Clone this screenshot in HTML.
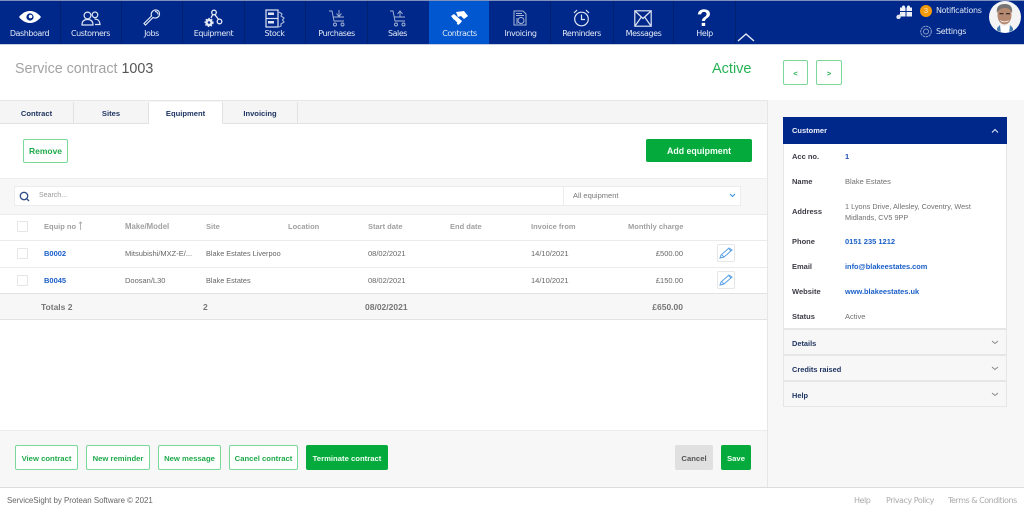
<!DOCTYPE html>
<html><head><meta charset="utf-8"><style>
html,body{margin:0;padding:0}
body{width:1024px;height:516px;position:relative;overflow:hidden;background:#fff;font-family:"Liberation Sans",sans-serif;font-size:7.5px;color:#666}
div,span.t,a,svg{position:absolute}
.t{position:absolute;white-space:nowrap;line-height:12px}
.n{color:#e4e9f5;top:28px;width:61px;text-align:center;line-height:12px;position:absolute;font-family:"DejaVu Sans",sans-serif;letter-spacing:-.45px;font-size:8px}
.sep{position:absolute;top:1px;height:43px;width:1px;background:#00216f}
.ic{position:absolute;fill:none;stroke:#dfe5f3;stroke-width:1.2}
.tab{position:absolute;top:102px;height:22px;line-height:23px;text-align:center;font-weight:bold;color:#1f3561;font-size:7.6px;box-sizing:border-box;border-right:1px solid #e2e2e2;border-bottom:1px solid #e2e2e2;background:#f5f5f5}
.b{position:absolute;box-sizing:border-box;border:1px solid #7bd79a;border-radius:2px;color:#1faa4a;background:#fff;font-weight:bold;text-align:center;font-size:7.7px;font-family:"Liberation Sans",sans-serif}
.g{background:#04aa3c;border-color:#04aa3c;color:#f2fff5}
.h{font-weight:bold;color:#a0a0a0;top:221px}
.hl{position:absolute;left:0;width:767px;height:1px;background:#ebebeb}
.c{position:absolute;left:17px;width:9px;height:9px;border:1px solid #e6e6e6;border-radius:1px;background:#fff}
.l{left:792px;font-weight:bold;color:#3c3c46}
.v{left:845px;color:#707070}
.lk{left:845px;font-weight:bold;color:#1a5fc8}
.acc{position:absolute;left:783px;width:224px;height:26px;box-sizing:border-box;border:1px solid #e6e6e6;background:#f7f7f7;font-weight:bold;color:#1f3561;line-height:27px;padding-left:8px;font-size:7.4px}
.pen{position:absolute;left:717px;width:18px;height:18px;box-sizing:border-box;border:1px solid #e6e6e6;border-radius:2px;background:#fff}
.f{top:495px;color:#aaa;font-size:8px;font-family:'DejaVu Sans',sans-serif;letter-spacing:-.47px}
</style></head><body>

<div style="left:0;top:0;width:1024px;height:45px;background:#00288a;border-top:1px solid #7f90bd;border-bottom:1px solid #c5cde0;box-sizing:border-box"></div>
<div style="left:429px;top:1px;width:60px;height:43px;background:#0057cf"></div>
<span class="sep" style="left:60px"></span><span class="sep" style="left:121px"></span><span class="sep" style="left:182px"></span><span class="sep" style="left:244px"></span><span class="sep" style="left:305px"></span><span class="sep" style="left:367px"></span><span class="sep" style="left:550px"></span><span class="sep" style="left:613px"></span><span class="sep" style="left:673px"></span><span class="sep" style="left:735px"></span>

<span class="n" style="left:-1px">Dashboard</span><span class="n" style="left:60px">Customers</span><span class="n" style="left:121px">Jobs</span><span class="n" style="left:183px">Equipment</span><span class="n" style="left:244px">Stock</span><span class="n" style="left:306px">Purchases</span><span class="n" style="left:367px">Sales</span><span class="n" style="left:429px">Contracts</span><span class="n" style="left:490px">Invoicing</span><span class="n" style="left:551px">Reminders</span><span class="n" style="left:613px">Messages</span><span class="n" style="left:674px">Help</span>

<!-- dashboard eye -->
<svg style="left:18px;top:10px" width="24" height="14" viewBox="0 0 24 14"><path d="M1 7C5 2 9 1 12 1s7 1 11 6c-4 5-8 6-11 6S5 12 1 7z" fill="#fff"/><circle cx="12" cy="7" r="3.6" fill="#00288a"/><circle cx="12.5" cy="6.5" r="1.8" fill="#fff"/></svg>
<!-- customers -->
<svg class="ic" style="left:81px;top:11px" width="20" height="15" viewBox="0 0 20 15"><circle cx="6.5" cy="4.5" r="3.4"/><path d="M1 14c0-4 2.500-5.500 5.500-5.500S12 10 12 14z"/><circle cx="14" cy="3.800" r="2.800"/><path d="M13.500 8c3 0 5 1 5.500 5.500h-5"/></svg>
<!-- jobs -->
<svg class="ic" style="left:143px;top:9px" width="18" height="18" viewBox="0 0 18 18"><path d="M10 8.500L2.500 16 1 14.500 8.500 7C7.500 4 9.500 1 13 1c2 0 3.500 1.500 3.500 4 0 3-3.500 5-6.500 3.500z"/><path d="M12 2.500a3 3 0 0 1 3 3"/></svg>
<!-- equipment -->
<svg style="left:204px;top:9px" width="19" height="19" viewBox="0 0 19 19" fill="none" stroke="#e4e9f5" stroke-width="1.300"><circle cx="10" cy="3.500" r="2.300"/><circle cx="15.500" cy="12.500" r="2.300"/><path d="M11 5.800l3.500 4.600M8.700 5.500L7 9"/><circle cx="5" cy="13.500" r="2.500" stroke-width="2.400"/><circle cx="5" cy="13.500" r="4" stroke-width="1.200" stroke-dasharray="1.500 1.500"/></svg>
<!-- stock -->
<svg class="ic" style="left:265px;top:9px" width="20" height="19" viewBox="0 0 20 19"><rect x="1" y="1" width="12" height="17"/><path d="M1 9.500h12"/><rect x="3" y="3.500" width="6" height="2.500" fill="#dfe5f3" stroke="none"/><rect x="3" y="12" width="6" height="2.500" fill="#dfe5f3" stroke="none"/><path d="M14 3l3 2-1 2 3 2-1.500 2 1.500 2-3 2 0 2-2 1" stroke="#9fb0d6"/></svg>
<!-- purchases -->
<svg style="left:329px;top:10px" width="18" height="18" viewBox="0 0 18 18" fill="none" stroke="#a9b6d6" stroke-width=".9"><path d="M0 1h3l2 10h10M4 7h11"/><circle cx="6" cy="14.500" r="1.500"/><circle cx="13.500" cy="14.500" r="1.500"/><path d="M10 0v6M7.500 3.500L10 6.500l2.500-3"/></svg>
<!-- sales -->
<svg style="left:390px;top:10px" width="18" height="18" viewBox="0 0 18 18" fill="none" stroke="#a9b6d6" stroke-width=".9"><path d="M0 1h3l2 10h10M4 7h11"/><circle cx="6" cy="14.500" r="1.500"/><circle cx="13.500" cy="14.500" r="1.500"/><path d="M10 7V2M7.500 4L10 1l2.500 3"/></svg>
<!-- contracts -->
<svg style="left:451px;top:11px" width="17" height="15" viewBox="0 0 17 15"><path d="M5 1l8-1 4 5-4 3-3-3-3 1z" fill="#fff"/><path d="M0 5l3-2 8 7-1.500 2L8.500 13 7 14z" fill="#fff"/><path d="M3 9l3 3" stroke="#0057cf" stroke-width="1"/></svg>
<!-- invoicing -->
<svg style="left:513px;top:10px" width="14" height="16" viewBox="0 0 14 16" fill="none" stroke="#a9b6d6"><path d="M1 1h9l3 3v11H1z"/><path d="M3 3.500h6M3 5.500h8"/><circle cx="8" cy="10.500" r="3"/><path d="M3 9h2M3 11h2M3 13h2"/></svg>
<!-- reminders -->
<svg class="ic" style="left:573px;top:9px" width="17" height="18" viewBox="0 0 17 18"><circle cx="8.500" cy="10" r="6.800"/><path d="M8.500 5.500V10.500H12M1 4l3-3M16 4l-3-3"/></svg>
<!-- messages -->
<svg class="ic" style="left:634px;top:10px" width="18" height="17" viewBox="0 0 18 17"><rect x=".8" y=".8" width="16.400" height="15.400"/><path d="M1 1l8 7.500L17 1M1 16l6-8.500M17 16l-6-8.500"/></svg>
<!-- help -->
<span class="t" style="left:694px;top:8px;width:20px;text-align:center;color:#fff;font-weight:bold;font-size:24px;line-height:22px">?</span>
<svg style="left:737px;top:32px" width="18" height="10" viewBox="0 0 18 10" fill="none" stroke="#e8ecf6" stroke-width="1.400"><path d="M1 9l8-7 8 7"/></svg>

<!-- top right -->
<svg style="left:896px;top:5px" width="16" height="14" viewBox="0 0 16 14"><rect x="4" y="2.500" width="12" height="9" fill="#eef1f8"/><path d="M10 2.500v9M4 6.500h12" stroke="#00288a" stroke-width="1"/><circle cx="7.500" cy="2" r="1.500" fill="#eef1f8"/><circle cx="12.500" cy="2" r="1.500" fill="#eef1f8"/><circle cx="2.500" cy="12" r="2.200" fill="#dde3ee"/><path d="M3 11l3-3" stroke="#dde3ee" stroke-width="1.500"/></svg>
<div style="left:920px;top:5px;width:12px;height:12px;border-radius:50%;background:#f59a0c;color:#fde9c6;font-size:7.500px;line-height:12px;text-align:center">3</div>
<span class="t" style="left:936px;top:5px;color:#dfe5f3;font-size:8px;font-family:'DejaVu Sans',sans-serif;letter-spacing:-.35px">Notifications</span>
<svg style="left:919px;top:25px" width="14" height="13" viewBox="0 0 14 13" fill="none" stroke="#8c9dca"><circle cx="7" cy="6.500" r="2.500"/><circle cx="7" cy="6.500" r="5.300" stroke-dasharray="2.500 .6"/></svg>
<span class="t" style="left:936px;top:26px;color:#dfe5f3;font-size:8px;font-family:'DejaVu Sans',sans-serif;letter-spacing:-.35px">Settings</span>
<svg style="left:988px;top:0" width="34" height="34" viewBox="0 0 34 34"><defs><clipPath id="cp"><circle cx="17" cy="17" r="15.500"/></clipPath></defs><circle cx="17" cy="17" r="16" fill="#f4f4f4"/><g clip-path="url(#cp)"><path d="M4 34c1-6 6-8 13-8s12 2 13 8z" fill="#fff"/><path d="M9 28l3-3 1 9H9zM25 28l-3-3-1 9h4z" fill="#4a7fb0"/><ellipse cx="16.500" cy="15" rx="7" ry="9.500" fill="#b58870"/><path d="M9 13c-1-7 3-9 8-9s8 3 7 9c-2-4-4-5-7-5s-6 1-8 5z" fill="#777573"/><path d="M12 20c3 2 6 2 9 0-1 3-8 3-9 0z" fill="#fff"/><rect x="11.500" y="13" width="4" height="1.300" fill="#3c2c26"/><rect x="18" y="13" width="4" height="1.300" fill="#3c2c26"/></g></svg>

<!-- header -->
<span class="t" style="left:15px;top:60px;font-size:14.300px;line-height:18px;color:#a3a3a3">Service contract <span style="color:#555">1003</span></span>
<span class="t" style="left:712px;top:60px;font-size:14.500px;line-height:18px;color:#26b355">Active</span>
<div class="b" style="left:783px;top:60px;width:25px;height:25px;line-height:25px">&lt;</div>
<div class="b" style="left:816px;top:60px;width:26px;height:25px;line-height:25px">&gt;</div>

<!-- right column -->
<div style="left:768px;top:100px;width:256px;height:387px;background:#f7f7f7"></div>
<div style="left:767px;top:100px;width:1px;height:387px;background:#e6e6e6"></div>
<div style="left:0;top:100px;width:768px;height:1px;background:#e6e6e6"></div>

<!-- tabs -->
<div style="left:0;top:101px;width:767px;height:23px;background:#f5f5f5;border-bottom:1px solid #e2e2e2;box-sizing:border-box"></div>
<div class="tab" style="left:0;width:74px">Contract</div>
<div class="tab" style="left:74px;width:75px">Sites</div>
<div class="tab" style="left:149px;width:74px;background:#fff;border-bottom-color:#fff">Equipment</div>
<div class="tab" style="left:223px;width:75px">Invoicing</div>

<div class="b" style="left:23px;top:139px;width:45px;height:24px;line-height:23px;font-size:8.500px">Remove</div>
<div class="b g" style="left:646px;top:139px;width:106px;height:23px;line-height:23px;font-size:8.800px">Add equipment</div>

<div style="left:0;top:178px;width:767px;height:36px;background:#f7f7f7;border-top:1px solid #eeeeee;box-sizing:border-box"></div>
<div style="left:14px;top:186px;width:727px;height:20px;background:#fff;border:1px solid #ececec;box-sizing:border-box"></div>
<div style="left:563px;top:186px;width:1px;height:20px;background:#ececec"></div>
<svg style="left:19px;top:191px" width="11" height="11" viewBox="0 0 11 11" fill="none" stroke="#2f4f86" stroke-width="1.300"><circle cx="5" cy="5" r="3.700"/><path d="M7.500 7.500L10 10"/></svg>
<span class="t" style="left:39px;top:190px;color:#999;font-size:7px">Search...</span>
<span class="t" style="left:573px;top:190px;color:#777">All equipment</span>
<svg style="left:729px;top:193px" width="7" height="5" viewBox="0 0 7 5" fill="none" stroke="#3a8fdc" stroke-width="1.100"><path d="M1 1l2.500 2.500L6 1"/></svg>

<!-- table -->
<div class="hl" style="top:214px"></div><div class="hl" style="top:240px"></div><div class="hl" style="top:267px"></div>
<div style="left:0;top:293px;width:767px;height:27px;background:#f7f7f7;border-top:1px solid #e2e2e2;border-bottom:1px solid #e2e2e2;box-sizing:border-box"></div>
<div class="c" style="top:221px"></div><div class="c" style="top:248px"></div><div class="c" style="top:275px"></div>
<span class="t h" style="left:44px">Equip no</span>
<svg style="left:78px;top:221px" width="5" height="9" viewBox="0 0 5 9" fill="none" stroke="#a5a5a5" stroke-width=".8"><path d="M2.500 9V1M1 2.500L2.500 1 4 2.500"/></svg>
<span class="t h" style="left:125px;font-size:7.800px">Make/Model</span><span class="t h" style="left:206px">Site</span><span class="t h" style="left:288px">Location</span><span class="t h" style="left:368px">Start date</span><span class="t h" style="left:450px">End date</span><span class="t h" style="left:531px">Invoice from</span><span class="t h" style="left:628px">Monthly charge</span>

<span class="t" style="left:44px;top:248px;font-weight:bold;color:#1a5fc8">B0002</span>
<span class="t" style="left:125px;top:248px">Mitsubishi/MXZ-E/...</span>
<span class="t" style="left:206px;top:248px;font-size:7.300px">Blake Estates Liverpoo</span>
<span class="t" style="left:368px;top:248px">08/02/2021</span>
<span class="t" style="left:531px;top:248px">14/10/2021</span>
<span class="t" style="left:583px;top:248px;width:100px;text-align:right">£500.00</span>
<span class="t" style="left:44px;top:275px;font-weight:bold;color:#1a5fc8">B0045</span>
<span class="t" style="left:125px;top:275px">Doosan/L30</span>
<span class="t" style="left:206px;top:275px;font-size:7.300px">Blake Estates</span>
<span class="t" style="left:368px;top:275px">08/02/2021</span>
<span class="t" style="left:531px;top:275px">14/10/2021</span>
<span class="t" style="left:583px;top:275px;width:100px;text-align:right">£150.00</span>

<div class="pen" style="top:244px"></div><div class="pen" style="top:271px"></div>
<svg style="left:719px;top:247px" width="14" height="12" viewBox="0 0 14 12" fill="none" stroke="#5aa0e6"><path d="M1 11l1-3 8-7 3 2-8 7z"/><path d="M3 8l2 2M10 2l2 2"/></svg>
<svg style="left:719px;top:274px" width="14" height="12" viewBox="0 0 14 12" fill="none" stroke="#5aa0e6"><path d="M1 11l1-3 8-7 3 2-8 7z"/><path d="M3 8l2 2M10 2l2 2"/></svg>

<span class="t" style="left:41px;top:301px;font-size:8.500px;font-weight:bold;color:#777">Totals 2</span>
<span class="t" style="left:203px;top:301px;font-size:8.500px;font-weight:bold;color:#777">2</span>
<span class="t" style="left:365px;top:301px;font-size:8.500px;font-weight:bold;color:#777">08/02/2021</span>
<span class="t" style="left:583px;top:301px;width:100px;text-align:right;font-size:8.500px;font-weight:bold;color:#777">£650.00</span>

<!-- action bar -->
<div style="left:0;top:430px;width:767px;height:57px;background:#f7f7f7;border-top:1px solid #ececec;box-sizing:border-box"></div>
<div class="b" style="left:15px;top:445px;width:63px;height:25px;line-height:25px">View contract</div>
<div class="b" style="left:86px;top:445px;width:64px;height:25px;line-height:25px">New reminder</div>
<div class="b" style="left:158px;top:445px;width:63px;height:25px;line-height:25px">New message</div>
<div class="b" style="left:229px;top:445px;width:69px;height:25px;line-height:25px">Cancel contract</div>
<div class="b g" style="left:306px;top:445px;width:82px;height:25px;line-height:25px">Terminate contract</div>
<div class="b" style="left:675px;top:445px;width:38px;height:25px;line-height:25px;background:#e0e0e0;border-color:#e0e0e0;color:#555">Cancel</div>
<div class="b g" style="left:721px;top:445px;width:30px;height:25px;line-height:25px">Save</div>

<!-- footer -->
<div style="left:0;top:487px;width:1024px;height:1px;background:#dcdcdc"></div>
<span class="t" style="left:7px;top:495px;color:#666;font-size:7.900px">ServiceSight by Protean Software © 2021</span>
<span class="t f" style="left:854px">Help</span>
<span class="t f" style="left:886px">Privacy Policy</span>
<span class="t f" style="left:948px">Terms &amp; Conditions</span>

<!-- customer panel -->
<div style="left:783px;top:117px;width:224px;height:212px;background:#fff;border:1px solid #e6e6e6;border-top:0;box-sizing:border-box"></div>
<div style="left:783px;top:117px;width:224px;height:27px;background:#00288a"></div>
<span class="t" style="left:792px;top:125px;color:#eef1f8;font-weight:bold">Customer</span>
<svg style="left:991px;top:128px" width="8" height="6" viewBox="0 0 8 6" fill="none" stroke="#dfe5f3" stroke-width="1.100"><path d="M1 4.500L4 1.500l3 3"/></svg>
<span class="t l" style="top:151px">Acc no.</span><span class="t" style="left:845px;top:151px;font-weight:bold;color:#1f4fb0">1</span>
<span class="t l" style="top:176px">Name</span><span class="t v" style="top:176px">Blake Estates</span>
<span class="t l" style="top:206px">Address</span><span class="t v" style="top:202px;line-height:10.500px;width:145px;white-space:normal;font-size:7.300px">1 Lyons Drive, Allesley, Coventry, West Midlands, CV5 9PP</span>
<span class="t l" style="top:236px">Phone</span><span class="t lk" style="top:236px">0151 235 1212</span>
<span class="t l" style="top:261px">Email</span><span class="t lk" style="top:261px;font-size:7.400px">info@blakeestates.com</span>
<span class="t l" style="top:286px">Website</span><span class="t lk" style="top:286px;font-size:7.400px">www.blakeestates.uk</span>
<span class="t l" style="top:311px">Status</span><span class="t v" style="top:311px">Active</span>

<div class="acc" style="top:329px">Details</div>
<div class="acc" style="top:355px">Credits raised</div>
<div class="acc" style="top:381px">Help</div>
<svg style="left:991px;top:340px" width="8" height="5" viewBox="0 0 8 5" fill="none" stroke="#8a8a8a"><path d="M1 1l3 2.500L7 1"/></svg>
<svg style="left:991px;top:366px" width="8" height="5" viewBox="0 0 8 5" fill="none" stroke="#8a8a8a"><path d="M1 1l3 2.500L7 1"/></svg>
<svg style="left:991px;top:392px" width="8" height="5" viewBox="0 0 8 5" fill="none" stroke="#8a8a8a"><path d="M1 1l3 2.500L7 1"/></svg>
</body></html>
